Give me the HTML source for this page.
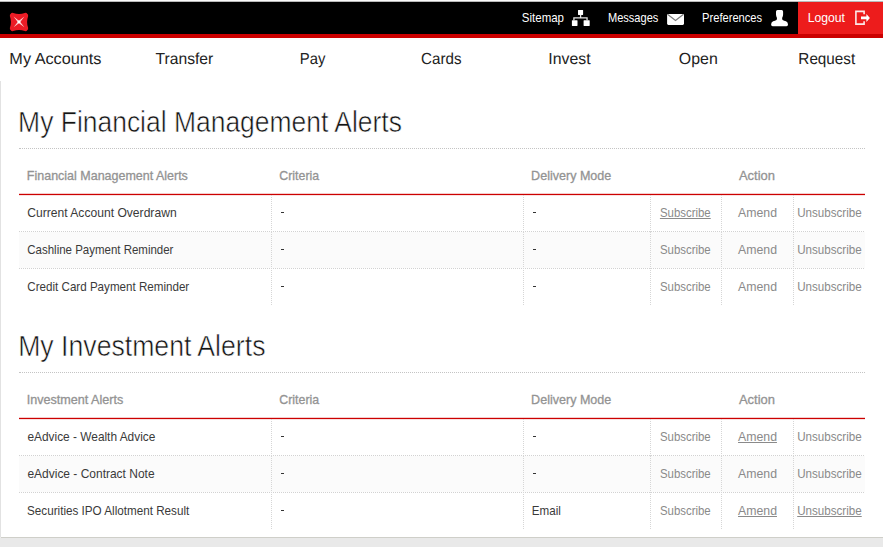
<!DOCTYPE html>
<html><head><meta charset="utf-8"><title>Alerts</title>
<style>
html,body{margin:0;padding:0;background:#fff;}
body{width:883px;height:549px;overflow:hidden;position:relative;font-family:"Liberation Sans",sans-serif;}
#root{position:absolute;left:0;top:0;width:883px;height:549px;overflow:hidden;background:#fff;}
.t{position:absolute;white-space:nowrap;line-height:normal;transform-origin:0 0;display:block;}
.abs{position:absolute;}
.hd{position:absolute;left:19px;width:846px;height:1px;background:repeating-linear-gradient(90deg,#d2d2d2 0 1px,transparent 1px 2px);}
.hd.top{background:linear-gradient(#c4c4c4,#c4c4c4) 0 0/1px 1px no-repeat,repeating-linear-gradient(90deg,#c4c4c4 0 1px,transparent 1px 2px) 1px 0/846px 1px no-repeat;}
.vd{position:absolute;width:1px;background:repeating-linear-gradient(180deg,#d6d6d6 0 1px,transparent 1px 2px);}
.red{position:absolute;left:19px;width:846px;height:3px;background:linear-gradient(180deg,rgba(204,0,0,.2) 0 1px,#cc0000 1px 2px,rgba(204,0,0,.12) 2px 3px);}
.alt{position:absolute;left:19px;width:846px;height:36px;background:#fbfbfb;}
</style></head><body><div id="root">
<!-- top bar -->
<div class="abs" style="left:0;top:0;width:883px;height:1px;background:#fbfbfb;"></div>
<div class="abs" style="left:0;top:1px;width:883px;height:1px;background:#b9b9b9;"></div>
<div class="abs" style="left:0;top:2px;width:883px;height:32px;background:#000;"></div>
<div class="abs" style="left:798px;top:2px;width:85px;height:32px;background:#ed1c1c;"></div>
<div class="abs" style="left:0;top:34px;width:883px;height:4px;background:#cc0000;"></div>
<!-- left strip & bottom -->
<div class="abs" style="left:0;top:81px;width:1px;height:456px;background:#e2e2e2;"></div>
<div class="abs" style="left:0;top:537px;width:883px;height:10px;background:#e9e9e9;"></div>
<div class="abs" style="left:1px;top:536.5px;width:882px;height:1.5px;background:#cfcfc9;"></div>
<!-- table 1 lines -->
<div class="hd top" style="top:148px;"></div>
<div class="red" style="top:193px;"></div>
<div class="alt" style="top:232px;"></div>
<div class="hd" style="top:231px;"></div>
<div class="hd" style="top:268px;"></div>
<div class="vd" style="left:271px;top:195px;height:37px;"></div>
<div class="vd" style="left:271px;top:232px;height:73px;"></div>
<div class="vd" style="left:523px;top:195px;height:37px;"></div>
<div class="vd" style="left:523px;top:232px;height:73px;"></div>
<div class="vd" style="left:650px;top:195px;height:37px;"></div>
<div class="vd" style="left:650px;top:232px;height:73px;"></div>
<div class="vd" style="left:721px;top:195px;height:37px;"></div>
<div class="vd" style="left:721px;top:232px;height:73px;"></div>
<div class="vd" style="left:793px;top:195px;height:37px;"></div>
<div class="vd" style="left:793px;top:232px;height:73px;"></div>
<!-- table 2 lines -->
<div class="hd top" style="top:372px;"></div>
<div class="red" style="top:417px;"></div>
<div class="alt" style="top:456px;"></div>
<div class="hd" style="top:455px;"></div>
<div class="hd" style="top:492px;"></div>
<div class="vd" style="left:271px;top:419px;height:37px;"></div>
<div class="vd" style="left:271px;top:456px;height:73px;"></div>
<div class="vd" style="left:523px;top:419px;height:37px;"></div>
<div class="vd" style="left:523px;top:456px;height:73px;"></div>
<div class="vd" style="left:650px;top:419px;height:37px;"></div>
<div class="vd" style="left:650px;top:456px;height:73px;"></div>
<div class="vd" style="left:721px;top:419px;height:37px;"></div>
<div class="vd" style="left:721px;top:456px;height:73px;"></div>
<div class="vd" style="left:793px;top:419px;height:37px;"></div>
<div class="vd" style="left:793px;top:456px;height:73px;"></div>
<!-- icons -->
<svg class="abs" style="left:9px;top:12px;" width="20" height="20" viewBox="0 0 20 20">
<path d="M4.2 0.9 Q10 2.9 15.8 0.9 Q17.6 0.5 18.2 1.8 Q19.5 2.4 19.1 4.2 Q17.1 10 19.1 15.8 Q19.5 17.6 18.2 18.2 Q17.6 19.5 15.8 19.1 Q10 17.1 4.2 19.1 Q2.4 19.5 1.8 18.2 Q0.5 17.6 0.9 15.8 Q2.9 10 0.9 4.2 Q0.5 2.4 1.8 1.8 Q2.4 0.5 4.2 0.9Z" fill="#ec1c26"/>
<path d="M4.6 4.6 L9.95 8.7 L15.4 4.6 L11.3 9.95 L15.4 15.2 L9.95 11.2 L4.6 15.2 L8.7 9.95Z" fill="#fff" opacity="0.8"/>
<circle cx="9.95" cy="9.95" r="1.35" fill="#fff"/>
</svg>
<svg class="abs" style="left:571px;top:9px;" width="20" height="18" viewBox="0 0 20 18">
<rect x="7" y="0.9" width="5.1" height="5.1" rx="0.4" fill="#fff"/>
<rect x="0.9" y="11.3" width="5.6" height="5.6" rx="0.4" fill="#fff"/>
<rect x="12.6" y="11.3" width="6.1" height="5.6" rx="0.4" fill="#fff"/>
<path d="M9.6 5.8 V8.8 M2.9 11.6 V8.8 H16.05 V11.6" stroke="#e4e4e4" stroke-width="1.3" fill="none"/>
</svg>
<svg class="abs" style="left:666px;top:13px;" width="19" height="13" viewBox="0 0 19 13">
<rect x="1.1" y="1" width="16.9" height="10.9" rx="1.3" fill="#fff"/>
<path d="M1.8 1.6 L9.5 7.4 L17.2 1.6" stroke="#7c7c7c" stroke-width="1.2" fill="none"/>
</svg>
<svg class="abs" style="left:770px;top:9px;" width="19" height="18" viewBox="0 0 19 18">
<path d="M7.6 1 H11.6 Q13.2 1 13.1 2.8 V5.5 Q13 7.5 12.2 8.8 Q11.9 10.2 12.6 10.9 Q14 11.6 16 12.3 Q18 13.2 18 15.6 Q18 17.2 16.5 17.2 H2.6 Q1.1 17.2 1.1 15.6 Q1.1 13.2 3.1 12.3 Q5.1 11.6 6.5 10.9 Q7.2 10.2 6.9 8.8 Q6.1 7.5 6 5.5 V2.8 Q5.9 1 7.6 1Z" fill="#fff"/>
</svg>
<svg class="abs" style="left:854px;top:9px;" width="18" height="17" viewBox="0 0 18 17">
<path d="M10.1 5.2 V2.4 H1.9 V15.1 H10.1 V12.3" stroke="#fbe9e9" stroke-width="1.6" fill="none"/>
<path d="M7 7.6 H12.4 V5 L15.9 9 L12.4 12.9 V10.3 H7Z" fill="#fff"/>
</svg>
<span class="t" style="left:521px;top:10px;font-size:12.8px;color:#ffffff;transform:translate(0.87px,0.00px) scale(0.8977,1.0000);">Sitemap</span>
<span class="t" style="left:607px;top:10px;font-size:12.8px;color:#ffffff;transform:translate(0.97px,0.00px) scale(0.8634,1.0000);">Messages</span>
<span class="t" style="left:702px;top:10px;font-size:12.8px;color:#ffffff;transform:translate(0.11px,0.00px) scale(0.8693,1.0000);">Preferences</span>
<span class="t" style="left:807px;top:10px;font-size:12.8px;color:#ffffff;transform:translate(0.74px,0.00px) scale(0.9510,1.0000);">Logout</span>
<span class="t" style="left:9px;top:51px;font-size:16px;color:#222222;transform:translate(0.36px,0.00px) scale(1.0156,1.0000);text-rendering:geometricPrecision;">My Accounts</span>
<span class="t" style="left:155px;top:51px;font-size:16px;color:#222222;transform:translate(0.54px,0.00px) scale(0.9789,1.0000);text-rendering:geometricPrecision;">Transfer</span>
<span class="t" style="left:299px;top:51px;font-size:16px;color:#222222;transform:translate(0.82px,0.00px) scale(0.9270,1.0000);text-rendering:geometricPrecision;">Pay</span>
<span class="t" style="left:421px;top:51px;font-size:16px;color:#222222;transform:translate(0.11px,0.00px) scale(0.9466,1.0000);text-rendering:geometricPrecision;">Cards</span>
<span class="t" style="left:548px;top:51px;font-size:16px;color:#222222;transform:translate(0.34px,0.00px) scale(0.9890,1.0000);text-rendering:geometricPrecision;">Invest</span>
<span class="t" style="left:678px;top:51px;font-size:16px;color:#222222;transform:translate(0.86px,0.00px) scale(0.9946,1.0000);text-rendering:geometricPrecision;">Open</span>
<span class="t" style="left:798px;top:51px;font-size:16px;color:#222222;transform:translate(0.36px,0.00px) scale(0.9533,1.0000);text-rendering:geometricPrecision;">Request</span>
<span class="t" style="left:18px;top:106px;font-size:29px;color:#141414;transform:translate(0.11px,0.00px) scale(0.9122,1.0000);-webkit-text-stroke:0.55px #fff;">My Financial Management Alerts</span>
<span class="t" style="left:18px;top:330px;font-size:29px;color:#141414;transform:translate(0.16px,0.00px) scale(0.9188,1.0000);-webkit-text-stroke:0.55px #fff;">My Investment Alerts</span>
<span class="t" style="left:26px;top:169px;font-size:12.7px;color:#939393;transform:translate(0.87px,0.00px) scale(0.9840,1.0000);-webkit-text-stroke:0.3px #939393;">Financial Management Alerts</span>
<span class="t" style="left:279px;top:169px;font-size:12.7px;color:#939393;transform:translate(0.34px,0.00px) scale(0.9720,1.0000);-webkit-text-stroke:0.3px #939393;">Criteria</span>
<span class="t" style="left:531px;top:169px;font-size:12.7px;color:#939393;transform:translate(0.12px,0.00px) scale(0.9883,1.0000);-webkit-text-stroke:0.3px #939393;">Delivery Mode</span>
<span class="t" style="left:738px;top:169px;font-size:12.7px;color:#939393;transform:translate(0.96px,0.00px) scale(1.0216,1.0000);-webkit-text-stroke:0.3px #939393;">Action</span>
<span class="t" style="left:26px;top:393px;font-size:12.7px;color:#939393;transform:translate(0.82px,0.00px) scale(0.9911,1.0000);-webkit-text-stroke:0.3px #939393;">Investment Alerts</span>
<span class="t" style="left:279px;top:393px;font-size:12.7px;color:#939393;transform:translate(0.34px,0.00px) scale(0.9720,1.0000);-webkit-text-stroke:0.3px #939393;">Criteria</span>
<span class="t" style="left:531px;top:393px;font-size:12.7px;color:#939393;transform:translate(0.12px,0.00px) scale(0.9883,1.0000);-webkit-text-stroke:0.3px #939393;">Delivery Mode</span>
<span class="t" style="left:738px;top:393px;font-size:12.7px;color:#939393;transform:translate(0.96px,0.00px) scale(1.0216,1.0000);-webkit-text-stroke:0.3px #939393;">Action</span>
<span class="t" style="left:27px;top:206px;font-size:12.7px;color:#3a3a3a;transform:translate(0.22px,0.00px) scale(0.9543,1.0000);">Current Account Overdrawn</span>
<span class="t" style="left:659px;top:206px;font-size:12.7px;color:#8a8a8a;transform:translate(0.90px,0.00px) scale(0.9008,1.0000);text-decoration:underline;">Subscribe</span>
<span class="t" style="left:738px;top:206px;font-size:12.7px;color:#8a8a8a;transform:translate(0.03px,0.00px) scale(0.9684,1.0000);">Amend</span>
<span class="t" style="left:797px;top:206px;font-size:12.7px;color:#8a8a8a;transform:translate(0.20px,0.00px) scale(0.9149,1.0000);">Unsubscribe</span>
<span class="t" style="left:27px;top:243px;font-size:12.7px;color:#3a3a3a;transform:translate(0.31px,0.00px) scale(0.9048,1.0000);">Cashline Payment Reminder</span>
<span class="t" style="left:659px;top:243px;font-size:12.7px;color:#8a8a8a;transform:translate(0.90px,0.00px) scale(0.9008,1.0000);">Subscribe</span>
<span class="t" style="left:738px;top:243px;font-size:12.7px;color:#8a8a8a;transform:translate(0.03px,0.00px) scale(0.9684,1.0000);">Amend</span>
<span class="t" style="left:797px;top:243px;font-size:12.7px;color:#8a8a8a;transform:translate(0.20px,0.00px) scale(0.9149,1.0000);">Unsubscribe</span>
<span class="t" style="left:27px;top:280px;font-size:12.7px;color:#3a3a3a;transform:translate(0.31px,0.00px) scale(0.9148,1.0000);">Credit Card Payment Reminder</span>
<span class="t" style="left:659px;top:280px;font-size:12.7px;color:#8a8a8a;transform:translate(0.90px,0.00px) scale(0.9008,1.0000);">Subscribe</span>
<span class="t" style="left:738px;top:280px;font-size:12.7px;color:#8a8a8a;transform:translate(0.03px,0.00px) scale(0.9684,1.0000);">Amend</span>
<span class="t" style="left:797px;top:280px;font-size:12.7px;color:#8a8a8a;transform:translate(0.20px,0.00px) scale(0.9149,1.0000);">Unsubscribe</span>
<span class="t" style="left:27px;top:430px;font-size:12.7px;color:#3a3a3a;transform:translate(0.43px,0.00px) scale(0.9366,1.0000);">eAdvice - Wealth Advice</span>
<span class="t" style="left:659px;top:430px;font-size:12.7px;color:#8a8a8a;transform:translate(0.90px,0.00px) scale(0.9008,1.0000);">Subscribe</span>
<span class="t" style="left:738px;top:430px;font-size:12.7px;color:#8a8a8a;transform:translate(0.03px,0.00px) scale(0.9684,1.0000);text-decoration:underline;">Amend</span>
<span class="t" style="left:797px;top:430px;font-size:12.7px;color:#8a8a8a;transform:translate(0.20px,0.00px) scale(0.9149,1.0000);">Unsubscribe</span>
<span class="t" style="left:27px;top:467px;font-size:12.7px;color:#3a3a3a;transform:translate(0.42px,0.00px) scale(0.9439,1.0000);">eAdvice - Contract Note</span>
<span class="t" style="left:659px;top:467px;font-size:12.7px;color:#8a8a8a;transform:translate(0.90px,0.00px) scale(0.9008,1.0000);">Subscribe</span>
<span class="t" style="left:738px;top:467px;font-size:12.7px;color:#8a8a8a;transform:translate(0.03px,0.00px) scale(0.9684,1.0000);">Amend</span>
<span class="t" style="left:797px;top:467px;font-size:12.7px;color:#8a8a8a;transform:translate(0.20px,0.00px) scale(0.9149,1.0000);">Unsubscribe</span>
<span class="t" style="left:27px;top:504px;font-size:12.7px;color:#3a3a3a;transform:translate(0.06px,0.00px) scale(0.9200,1.0000);">Securities IPO Allotment Result</span>
<span class="t" style="left:531px;top:504px;font-size:12.7px;color:#3a3a3a;transform:translate(0.80px,0.00px) scale(0.9161,1.0000);">Email</span>
<span class="t" style="left:659px;top:504px;font-size:12.7px;color:#8a8a8a;transform:translate(0.90px,0.00px) scale(0.9008,1.0000);">Subscribe</span>
<span class="t" style="left:738px;top:504px;font-size:12.7px;color:#8a8a8a;transform:translate(0.03px,0.00px) scale(0.9684,1.0000);text-decoration:underline;">Amend</span>
<span class="t" style="left:797px;top:504px;font-size:12.7px;color:#8a8a8a;transform:translate(0.20px,0.00px) scale(0.9149,1.0000);text-decoration:underline;">Unsubscribe</span>
<div class="abs" style="left:281px;top:212px;width:3px;height:1px;background:#333;"></div>
<div class="abs" style="left:533px;top:212px;width:3px;height:1px;background:#333;"></div>
<div class="abs" style="left:281px;top:249px;width:3px;height:1px;background:#333;"></div>
<div class="abs" style="left:533px;top:249px;width:3px;height:1px;background:#333;"></div>
<div class="abs" style="left:281px;top:286px;width:3px;height:1px;background:#333;"></div>
<div class="abs" style="left:533px;top:286px;width:3px;height:1px;background:#333;"></div>
<div class="abs" style="left:281px;top:436px;width:3px;height:1px;background:#333;"></div>
<div class="abs" style="left:533px;top:436px;width:3px;height:1px;background:#333;"></div>
<div class="abs" style="left:281px;top:473px;width:3px;height:1px;background:#333;"></div>
<div class="abs" style="left:533px;top:473px;width:3px;height:1px;background:#333;"></div>
<div class="abs" style="left:281px;top:510px;width:3px;height:1px;background:#333;"></div>
</div></body></html>
